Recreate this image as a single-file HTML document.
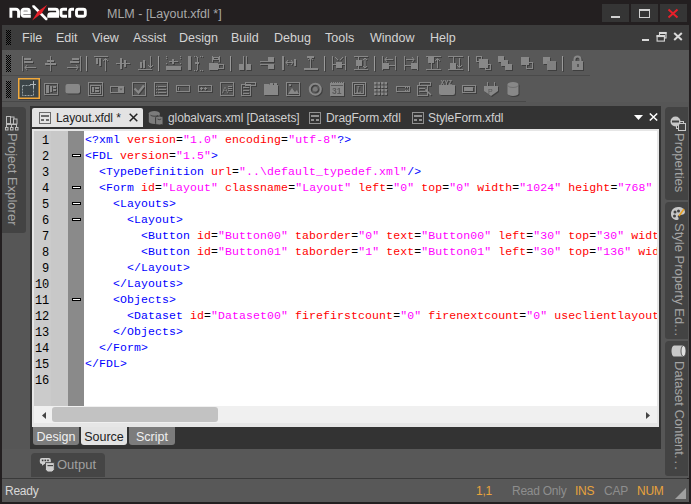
<!DOCTYPE html><html><head><meta charset="utf-8"><style>
*{margin:0;padding:0;box-sizing:border-box}
html,body{width:691px;height:504px;overflow:hidden;background:#231f20;font-family:"Liberation Sans",sans-serif;font-size:12px;position:relative}
.a{position:absolute}
.wb{top:4px;width:27px;height:18px;background:#353535}
.grip{width:6px;background-image:linear-gradient(45deg,#1a1a1a 25%,transparent 25%,transparent 75%,#1a1a1a 75%),linear-gradient(45deg,#1a1a1a 25%,transparent 25%,transparent 75%,#1a1a1a 75%);background-size:2px 2px;background-position:0 0,1px 1px}
.mi{top:31px;color:#d4d4d4;font-size:12.5px;line-height:15px;white-space:nowrap}
.ic{top:55px;width:16px;height:16px;filter:drop-shadow(1px 1px 0 #404040)}
.ic2{top:80px}
.sep{width:1px;height:15px;background:#8a8a8a;box-shadow:1px 0 0 #444}
.tab{top:109px;height:19px;color:#d0d0d0;font-size:12px;letter-spacing:-0.1px;line-height:19px;white-space:nowrap}
.code{left:85px;font-family:"Liberation Mono",monospace;font-size:11.5px;letter-spacing:0.1px;line-height:16px;white-space:pre;color:#000}
.ln{font-family:"Liberation Mono",monospace;font-size:12px;letter-spacing:-0.2px;line-height:16px;white-space:pre;color:#000;text-align:right;width:20px;left:29px}
.t{color:#0000ff}.n{color:#ff0000}.v{color:#ff00ff}
.fold{left:72px;width:9px;height:3px;border:1px solid #000;background:#fff}
.vt{writing-mode:vertical-rl;color:#a4a4a4;font-size:13px;white-space:nowrap;line-height:14px}
.btab{top:427px;height:18px;width:46px;font-size:12.5px;line-height:21px;text-align:center;border-radius:0 0 3px 3px}
.st{top:484px;font-size:12px;letter-spacing:-0.25px;line-height:15px;white-space:nowrap}
</style></head><body><svg class="a" style="left:0;top:0" width="100" height="25" viewBox="0 0 100 25"><g fill="none" stroke="#fff" stroke-width="2.9" stroke-linecap="butt"><path d="M10.9 17.8V9.3H16A2.6 2.6 0 0 1 18.6 11.9V17.8"/><path d="M30.8 16.3H24A2 2 0 0 1 21.9 14.3V11.3A2 2 0 0 1 24 9.3H27.3A2 2 0 0 1 29.3 11.3V12.8H21.9"/><path d="M48 9.3H55.6A2 2 0 0 1 57.6 11.3V17.8M57.6 13.8H50.7A2 2 0 0 0 48.7 15.8V16.3H57.6"/><path d="M67 9.3H63A2 2 0 0 0 61 11.3V14.3A2 2 0 0 0 63 16.3H67"/><path d="M69.7 17.8V11.3A2 2 0 0 1 71.7 9.3H74"/><path d="M78.5 9.3H83.3A2 2 0 0 1 85.3 11.3V14.3A2 2 0 0 1 83.3 16.3H78.5A2 2 0 0 1 76.5 14.3V11.3A2 2 0 0 1 78.5 9.3Z"/></g><path d="M32.3 5.2L34.4 5.2L47.6 18.6L47.2 20.2L45.6 20.2L32.3 7Z" fill="#fff"/><path d="M47.2 4.8L41.5 13.6L32.2 20.4L37.8 11.6Z" fill="#e8202a"/></svg><div class="a" style="left:107px;top:6px;color:#a9a9a9;font-size:12.5px;line-height:16px;white-space:nowrap">MLM - [Layout.xfdl *]</div><div class="a wb" style="left:602px"></div><div class="a wb" style="left:631px"></div><div class="a wb" style="left:660px"></div><div class="a" style="left:611px;top:16px;width:9px;height:2px;background:#d0d0d0"></div><div class="a" style="left:639px;top:9px;width:11px;height:9px;border:1.5px solid #d0d0d0;border-top-width:2.5px"></div><svg class="a" style="left:667px;top:8px" width="12" height="11"><path d="M1.5 1.5L10.5 9.5M10.5 1.5L1.5 9.5" stroke="#e8202a" stroke-width="2"/></svg><div class="a" style="left:2px;top:25px;width:687px;height:25px;background:#3c3c3c"></div><svg class="a" style="left:6px;top:30px" width="5" height="15" fill="#000" shape-rendering="crispEdges"><rect x="0" y="0" width="1" height="1"/><rect x="2" y="0" width="1" height="1"/><rect x="4" y="0" width="1" height="1"/><rect x="1" y="1" width="1" height="1"/><rect x="3" y="1" width="1" height="1"/><rect x="0" y="2" width="1" height="1"/><rect x="2" y="2" width="1" height="1"/><rect x="4" y="2" width="1" height="1"/><rect x="1" y="3" width="1" height="1"/><rect x="3" y="3" width="1" height="1"/><rect x="0" y="4" width="1" height="1"/><rect x="2" y="4" width="1" height="1"/><rect x="4" y="4" width="1" height="1"/><rect x="1" y="5" width="1" height="1"/><rect x="3" y="5" width="1" height="1"/><rect x="0" y="6" width="1" height="1"/><rect x="2" y="6" width="1" height="1"/><rect x="4" y="6" width="1" height="1"/><rect x="1" y="7" width="1" height="1"/><rect x="3" y="7" width="1" height="1"/><rect x="0" y="8" width="1" height="1"/><rect x="2" y="8" width="1" height="1"/><rect x="4" y="8" width="1" height="1"/><rect x="1" y="9" width="1" height="1"/><rect x="3" y="9" width="1" height="1"/><rect x="0" y="10" width="1" height="1"/><rect x="2" y="10" width="1" height="1"/><rect x="4" y="10" width="1" height="1"/><rect x="1" y="11" width="1" height="1"/><rect x="3" y="11" width="1" height="1"/><rect x="0" y="12" width="1" height="1"/><rect x="2" y="12" width="1" height="1"/><rect x="4" y="12" width="1" height="1"/><rect x="1" y="13" width="1" height="1"/><rect x="3" y="13" width="1" height="1"/><rect x="0" y="14" width="1" height="1"/><rect x="2" y="14" width="1" height="1"/><rect x="4" y="14" width="1" height="1"/></svg><div class="a mi" style="left:22px">File</div><div class="a mi" style="left:56px">Edit</div><div class="a mi" style="left:92px">View</div><div class="a mi" style="left:133px">Assist</div><div class="a mi" style="left:179px">Design</div><div class="a mi" style="left:231px">Build</div><div class="a mi" style="left:274px">Debug</div><div class="a mi" style="left:325px">Tools</div><div class="a mi" style="left:370px">Window</div><div class="a mi" style="left:430px">Help</div><div class="a" style="left:642px;top:39px;width:7px;height:2px;background:#d8d8d8"></div><svg class="a" style="left:656px;top:31px" width="12" height="11"><rect x="3.5" y="1.5" width="6.5" height="5.5" fill="none" stroke="#d8d8d8" stroke-width="1.1"/><rect x="3" y="1" width="7.5" height="2" fill="#d8d8d8"/><rect x="1.1" y="4.6" width="7.3" height="5.5" fill="#3c3c3c" stroke="#d8d8d8" stroke-width="1.1"/><rect x="0.6" y="4.1" width="8.3" height="2" fill="#d8d8d8"/></svg><svg class="a" style="left:673px;top:32px" width="10" height="9"><path d="M1.2 1L8.8 8M8.8 1L1.2 8" stroke="#d8d8d8" stroke-width="2"/></svg><div class="a" style="left:2px;top:50px;width:687px;height:52px;background:#585858"></div><div class="a" style="left:2px;top:75px;width:588px;height:1px;background:#4a4a4a"></div><div class="a" style="left:2px;top:101px;width:524px;height:1px;background:#484848"></div><svg class="a" style="left:6px;top:55px" width="5" height="17" fill="#000" shape-rendering="crispEdges"><rect x="0" y="0" width="1" height="1"/><rect x="2" y="0" width="1" height="1"/><rect x="4" y="0" width="1" height="1"/><rect x="1" y="1" width="1" height="1"/><rect x="3" y="1" width="1" height="1"/><rect x="0" y="2" width="1" height="1"/><rect x="2" y="2" width="1" height="1"/><rect x="4" y="2" width="1" height="1"/><rect x="1" y="3" width="1" height="1"/><rect x="3" y="3" width="1" height="1"/><rect x="0" y="4" width="1" height="1"/><rect x="2" y="4" width="1" height="1"/><rect x="4" y="4" width="1" height="1"/><rect x="1" y="5" width="1" height="1"/><rect x="3" y="5" width="1" height="1"/><rect x="0" y="6" width="1" height="1"/><rect x="2" y="6" width="1" height="1"/><rect x="4" y="6" width="1" height="1"/><rect x="1" y="7" width="1" height="1"/><rect x="3" y="7" width="1" height="1"/><rect x="0" y="8" width="1" height="1"/><rect x="2" y="8" width="1" height="1"/><rect x="4" y="8" width="1" height="1"/><rect x="1" y="9" width="1" height="1"/><rect x="3" y="9" width="1" height="1"/><rect x="0" y="10" width="1" height="1"/><rect x="2" y="10" width="1" height="1"/><rect x="4" y="10" width="1" height="1"/><rect x="1" y="11" width="1" height="1"/><rect x="3" y="11" width="1" height="1"/><rect x="0" y="12" width="1" height="1"/><rect x="2" y="12" width="1" height="1"/><rect x="4" y="12" width="1" height="1"/><rect x="1" y="13" width="1" height="1"/><rect x="3" y="13" width="1" height="1"/><rect x="0" y="14" width="1" height="1"/><rect x="2" y="14" width="1" height="1"/><rect x="4" y="14" width="1" height="1"/><rect x="1" y="15" width="1" height="1"/><rect x="3" y="15" width="1" height="1"/><rect x="0" y="16" width="1" height="1"/><rect x="2" y="16" width="1" height="1"/><rect x="4" y="16" width="1" height="1"/></svg><svg class="a" style="left:6px;top:81px" width="5" height="17" fill="#000" shape-rendering="crispEdges"><rect x="0" y="0" width="1" height="1"/><rect x="2" y="0" width="1" height="1"/><rect x="4" y="0" width="1" height="1"/><rect x="1" y="1" width="1" height="1"/><rect x="3" y="1" width="1" height="1"/><rect x="0" y="2" width="1" height="1"/><rect x="2" y="2" width="1" height="1"/><rect x="4" y="2" width="1" height="1"/><rect x="1" y="3" width="1" height="1"/><rect x="3" y="3" width="1" height="1"/><rect x="0" y="4" width="1" height="1"/><rect x="2" y="4" width="1" height="1"/><rect x="4" y="4" width="1" height="1"/><rect x="1" y="5" width="1" height="1"/><rect x="3" y="5" width="1" height="1"/><rect x="0" y="6" width="1" height="1"/><rect x="2" y="6" width="1" height="1"/><rect x="4" y="6" width="1" height="1"/><rect x="1" y="7" width="1" height="1"/><rect x="3" y="7" width="1" height="1"/><rect x="0" y="8" width="1" height="1"/><rect x="2" y="8" width="1" height="1"/><rect x="4" y="8" width="1" height="1"/><rect x="1" y="9" width="1" height="1"/><rect x="3" y="9" width="1" height="1"/><rect x="0" y="10" width="1" height="1"/><rect x="2" y="10" width="1" height="1"/><rect x="4" y="10" width="1" height="1"/><rect x="1" y="11" width="1" height="1"/><rect x="3" y="11" width="1" height="1"/><rect x="0" y="12" width="1" height="1"/><rect x="2" y="12" width="1" height="1"/><rect x="4" y="12" width="1" height="1"/><rect x="1" y="13" width="1" height="1"/><rect x="3" y="13" width="1" height="1"/><rect x="0" y="14" width="1" height="1"/><rect x="2" y="14" width="1" height="1"/><rect x="4" y="14" width="1" height="1"/><rect x="1" y="15" width="1" height="1"/><rect x="3" y="15" width="1" height="1"/><rect x="0" y="16" width="1" height="1"/><rect x="2" y="16" width="1" height="1"/><rect x="4" y="16" width="1" height="1"/></svg><svg class="a" style="left:0;top:0;filter:drop-shadow(1px 1px 0 #3e3e3e)" width="691" height="101" viewBox="0 0 691 101"><rect x="86" y="56" width="1" height="15" fill="#9a9a9a"/><rect x="158" y="56" width="1" height="15" fill="#9a9a9a"/><rect x="230" y="56" width="1" height="15" fill="#9a9a9a"/><rect x="324" y="56" width="1" height="15" fill="#9a9a9a"/><rect x="374" y="56" width="1" height="15" fill="#9a9a9a"/><rect x="468" y="56" width="1" height="15" fill="#9a9a9a"/><rect x="562" y="56" width="1" height="15" fill="#9a9a9a"/><rect x="22" y="56" width="1" height="15" fill="#888888"/><rect x="24" y="58" width="7" height="2" fill="#888888"/><rect x="24" y="61" width="9" height="2" fill="#888888"/><rect x="25" y="67" width="11" height="1" fill="#888888"/><path d="M27 65L25 67.5L27 70" fill="none" stroke="#888888" stroke-width="1"/><rect x="50" y="56" width="1" height="15" fill="#888888"/><rect x="47" y="60" width="7" height="2" fill="#888888"/><rect x="45" y="63" width="11" height="2" fill="#888888"/><rect x="80" y="56" width="1" height="15" fill="#888888"/><rect x="72" y="58" width="7" height="2" fill="#888888"/><rect x="70" y="61" width="9" height="2" fill="#888888"/><rect x="67" y="67" width="11" height="1" fill="#888888"/><path d="M76 65L78 67.5L76 70" fill="none" stroke="#888888" stroke-width="1"/><rect x="94" y="56" width="14" height="1" fill="#888888"/><rect x="96" y="58" width="2" height="6" fill="#888888"/><rect x="99" y="58" width="2" height="8" fill="#888888"/><rect x="105" y="59" width="1" height="12" fill="#888888"/><path d="M103 61L105.5 58.5L108 61" fill="none" stroke="#888888" stroke-width="1"/><rect x="116" y="63" width="14" height="1" fill="#888888"/><rect x="120" y="58" width="2" height="11" fill="#888888"/><rect x="124" y="60" width="2" height="7" fill="#888888"/><rect x="138" y="69" width="14" height="1" fill="#888888"/><rect x="140" y="62" width="2" height="6" fill="#888888"/><rect x="143" y="60" width="2" height="8" fill="#888888"/><rect x="150" y="56" width="1" height="12" fill="#888888"/><path d="M148 65L150.5 67.5L153 65" fill="none" stroke="#888888" stroke-width="1"/><rect x="166" y="56" width="1" height="1" fill="#888888"/><rect x="166" y="58" width="1" height="1" fill="#888888"/><rect x="180" y="56" width="1" height="1" fill="#888888"/><rect x="180" y="58" width="1" height="1" fill="#888888"/><rect x="166" y="63" width="1" height="1" fill="#888888"/><rect x="180" y="63" width="1" height="1" fill="#888888"/><rect x="166" y="66" width="15" height="4" fill="#888888"/><rect x="169" y="61" width="9" height="1" fill="#888888"/><rect x="172" y="59" width="2" height="5" fill="#888888"/><rect x="188" y="56" width="3" height="14" fill="#888888"/><rect x="194" y="56" width="1" height="1" fill="#888888"/><rect x="196" y="56" width="1" height="1" fill="#888888"/><rect x="200" y="56" width="1" height="1" fill="#888888"/><rect x="202" y="56" width="1" height="1" fill="#888888"/><rect x="194" y="70" width="1" height="1" fill="#888888"/><rect x="196" y="70" width="1" height="1" fill="#888888"/><rect x="200" y="70" width="1" height="1" fill="#888888"/><rect x="202" y="70" width="1" height="1" fill="#888888"/><rect x="197" y="57" width="1" height="13" fill="#888888"/><rect x="195" y="62" width="4" height="2" fill="#888888"/><rect x="212" y="56" width="1" height="6" fill="#888888"/><rect x="219" y="56" width="1" height="6" fill="#888888"/><rect x="213.5" y="57.5" width="5" height="2" fill="none" stroke="#888888" stroke-width="1"/><rect x="209" y="63" width="9" height="7" fill="#888888"/><rect x="218.5" y="64.5" width="5" height="4" fill="none" stroke="#888888" stroke-width="1"/><rect x="243" y="56" width="1" height="8" fill="#888888"/><rect x="246" y="56" width="1" height="8" fill="#888888"/><rect x="239" y="64" width="5" height="6" fill="#888888"/><rect x="246" y="64" width="5" height="6" fill="#888888"/><rect x="260" y="61" width="8" height="1" fill="#888888"/><rect x="260" y="64" width="8" height="1" fill="#888888"/><rect x="268" y="57" width="6" height="5" fill="#888888"/><rect x="268" y="64" width="6" height="5" fill="#888888"/><rect x="282" y="56" width="2" height="14" fill="#888888"/><rect x="294" y="59" width="2" height="7" fill="#888888"/><rect x="286" y="62" width="7" height="1" fill="#888888"/><path d="M288 60L286 62.5L288 65M291 60L293 62.5L291 65" fill="none" stroke="#888888" stroke-width="1"/><rect x="307" y="56" width="7" height="2" fill="#888888"/><rect x="304" y="68" width="14" height="2" fill="#888888"/><rect x="310" y="58" width="1" height="10" fill="#888888"/><path d="M308 60L310.5 58L313 60" fill="none" stroke="#888888" stroke-width="1"/><rect x="332" y="56" width="1" height="14" fill="#888888"/><rect x="345" y="56" width="1" height="14" fill="#888888"/><rect x="333" y="64" width="12" height="1" fill="#888888"/><rect x="336" y="62" width="6" height="6" fill="#888888"/><path d="M335 57L338 60M343 57L340 60" fill="none" stroke="#888888" stroke-width="1"/><rect x="354" y="56" width="14" height="1" fill="#888888"/><rect x="354" y="69" width="14" height="1" fill="#888888"/><rect x="358" y="57" width="1" height="12" fill="#888888"/><rect x="356" y="60" width="6" height="6" fill="#888888"/><path d="M365 58L365 68M363 60L365 58L367 60M363 66L365 68L367 66" fill="none" stroke="#888888" stroke-width="1"/><rect x="382" y="56" width="1" height="14" fill="#888888"/><rect x="395" y="56" width="1" height="14" fill="#888888"/><rect x="383" y="65" width="12" height="1" fill="#888888"/><rect x="383" y="63" width="6" height="6" fill="#888888"/><rect x="385" y="59" width="8" height="1" fill="#888888"/><path d="M387 57L385 59.5L387 62" fill="none" stroke="#888888" stroke-width="1"/><rect x="404" y="56" width="1" height="14" fill="#888888"/><rect x="417" y="56" width="1" height="14" fill="#888888"/><rect x="405" y="65" width="12" height="1" fill="#888888"/><rect x="411" y="63" width="6" height="6" fill="#888888"/><rect x="406" y="59" width="8" height="1" fill="#888888"/><path d="M412 57L414 59.5L412 62" fill="none" stroke="#888888" stroke-width="1"/><rect x="426" y="56" width="15" height="1" fill="#888888"/><rect x="426" y="69" width="15" height="1" fill="#888888"/><rect x="428" y="57" width="6" height="6" fill="#888888"/><rect x="431" y="63" width="1" height="6" fill="#888888"/><rect x="437" y="59" width="1" height="9" fill="#888888"/><path d="M435 61L437.5 58.5L440 61" fill="none" stroke="#888888" stroke-width="1"/><rect x="448" y="56" width="15" height="1" fill="#888888"/><rect x="448" y="69" width="15" height="1" fill="#888888"/><rect x="450" y="63" width="6" height="6" fill="#888888"/><rect x="453" y="57" width="1" height="6" fill="#888888"/><rect x="459" y="58" width="1" height="9" fill="#888888"/><path d="M457 65L459.5 67.5L462 65" fill="none" stroke="#888888" stroke-width="1"/><rect x="476.5" y="56.5" width="5" height="5" fill="none" stroke="#888888" stroke-width="1"/><rect x="479" y="59" width="9" height="9" fill="#888888"/><rect x="485.5" y="64.5" width="5" height="5" fill="none" stroke="#888888" stroke-width="1"/><rect x="498" y="56" width="6" height="6" fill="#888888"/><rect x="501" y="60" width="7" height="6" fill="#868686"/><rect x="505" y="64" width="7" height="6" fill="#888888"/><rect x="521" y="57" width="8" height="8" fill="#888888"/><rect x="526.5" y="62.5" width="6" height="6" fill="none" stroke="#888888" stroke-width="1"/><rect x="543" y="57" width="7" height="7" fill="#888888"/><rect x="547" y="61" width="9" height="9" fill="#808080"/><path d="M574.5 62V59.5A3 3 0 0 1 580.5 59.5V62" fill="none" stroke="#888888" stroke-width="2"/><rect x="572" y="61" width="11" height="9" fill="#888888"/><rect x="577" y="64" width="2" height="3" fill="#585858"/><rect x="18.75" y="78.75" width="20.5" height="19.5" fill="#3b4548" stroke="#f2a93b" stroke-width="1.5"/><path d="M22.5 85.5H31M22.5 85.5V95.5H33.5V88" fill="none" stroke="#9aa4a6" stroke-width="1" stroke-dasharray="2 1"/><rect x="30" y="84" width="6" height="1" fill="#b0b8ba"/><rect x="33" y="81" width="1" height="7" fill="#b0b8ba"/><rect x="44.5" y="83.5" width="13" height="11" fill="none" stroke="#888888" stroke-width="1"/><rect x="46" y="85" width="3" height="8" fill="#888888"/><rect x="50" y="86" width="2" height="6" fill="#888888"/><rect x="53" y="86" width="3" height="2" fill="#888888"/><rect x="53" y="89" width="3" height="2" fill="#888888"/><rect x="65.5" y="84" width="14.5" height="9.5" rx="2" fill="#888888"/><rect x="88.5" y="82.5" width="14" height="13" fill="none" stroke="#888888" stroke-width="1"/><rect x="90.5" y="85.5" width="10" height="8" fill="none" stroke="#888888" stroke-width="1"/><rect x="92" y="87" width="2" height="5" fill="#888888"/><rect x="95" y="87" width="4" height="2" fill="#888888"/><rect x="95" y="90" width="4" height="2" fill="#888888"/><rect x="110.5" y="86.5" width="13" height="6" fill="none" stroke="#888888" stroke-width="1"/><rect x="118" y="86" width="6" height="7" fill="#888888"/><path d="M119.5 88.5H122.5L121 90.5Z" fill="#585858"/><rect x="132.5" y="82.5" width="13" height="13" fill="none" stroke="#888888" stroke-width="1"/><path d="M134.5 88.5L138.5 92.5L144 85.5" fill="none" stroke="#888888" stroke-width="2.3"/><rect x="154.5" y="82.5" width="13" height="13" fill="none" stroke="#888888" stroke-width="1"/><rect x="156" y="86" width="1" height="1" fill="#888888"/><rect x="158" y="86" width="8" height="1" fill="#888888"/><rect x="156" y="89" width="1" height="1" fill="#888888"/><rect x="158" y="89" width="8" height="1" fill="#888888"/><rect x="156" y="92" width="1" height="1" fill="#888888"/><rect x="158" y="92" width="8" height="1" fill="#888888"/><rect x="176.5" y="85.5" width="13" height="6" fill="none" stroke="#888888" stroke-width="1"/><rect x="178" y="87" width="1" height="3" fill="#888888"/><rect x="198.5" y="85.5" width="13" height="6" fill="none" stroke="#888888" stroke-width="1"/><path d="M200 88.5H203M201.5 87V90M204 88.5H207M205.5 87V90" fill="none" stroke="#888888" stroke-width="1"/><rect x="220.5" y="82.5" width="13" height="13" fill="none" stroke="#888888" stroke-width="1"/><text x="222" y="93" font-family="Liberation Sans" font-size="9" fill="#888888">A</text><rect x="228" y="86" width="4" height="1" fill="#888888"/><rect x="228" y="88" width="4" height="1" fill="#888888"/><rect x="228" y="90" width="4" height="1" fill="#888888"/><rect x="241.5" y="84.5" width="9" height="11" fill="none" stroke="#888888" stroke-width="1"/><rect x="245.5" y="82.5" width="10" height="3" fill="none" stroke="#888888" stroke-width="1"/><rect x="243" y="87" width="6" height="1" fill="#888888"/><rect x="243" y="90" width="6" height="1" fill="#888888"/><rect x="243" y="93" width="6" height="1" fill="#888888"/><path d="M264 84H269L270 85H278V95H264Z" fill="#888888"/><rect x="270" y="83" width="3" height="2" fill="#888888"/><rect x="274" y="83" width="3" height="2" fill="#888888"/><rect x="286.5" y="82.5" width="13" height="13" fill="none" stroke="#888888" stroke-width="1"/><path d="M288 94L292 88L295 92L297 90L299 94Z" fill="#888888"/><rect x="289" y="84" width="2" height="2" fill="#888888"/><circle cx="315.3" cy="89.2" r="5.5" fill="none" stroke="#888888" stroke-width="2"/><circle cx="315.3" cy="89.2" r="2.5" fill="#7a7a7a"/><rect x="330" y="83" width="14" height="13" fill="#888888"/><rect x="331" y="82" width="1" height="1" fill="#888888"/><rect x="333" y="82" width="1" height="1" fill="#888888"/><rect x="335" y="82" width="1" height="1" fill="#888888"/><rect x="337" y="82" width="1" height="1" fill="#888888"/><rect x="339" y="82" width="1" height="1" fill="#888888"/><rect x="341" y="82" width="1" height="1" fill="#888888"/><rect x="343" y="82" width="1" height="1" fill="#888888"/><text x="332" y="94" font-family="Liberation Sans" font-weight="bold" font-size="8.5" fill="#5a5a5a">31</text><rect x="331" y="85" width="12" height="1" fill="#5a5a5a"/><rect x="352.5" y="82.5" width="13" height="13" fill="none" stroke="#888888" stroke-width="1"/><rect x="354.5" y="84.5" width="9" height="9" fill="none" stroke="#888888" stroke-width="1"/><text x="356" y="93" font-family="Liberation Serif" font-style="italic" font-size="10" fill="#888888">L</text><rect x="374.0" y="82.0" width="2.5" height="2.5" fill="#888888"/><rect x="374.0" y="85.5" width="2.5" height="2.5" fill="#888888"/><rect x="374.0" y="89.0" width="2.5" height="2.5" fill="#888888"/><rect x="374.0" y="92.5" width="2.5" height="2.5" fill="#888888"/><rect x="377.5" y="82.0" width="2.5" height="2.5" fill="#888888"/><rect x="377.5" y="85.5" width="2.5" height="2.5" fill="#888888"/><rect x="377.5" y="89.0" width="2.5" height="2.5" fill="#888888"/><rect x="377.5" y="92.5" width="2.5" height="2.5" fill="#888888"/><rect x="381.0" y="82.0" width="2.5" height="2.5" fill="#888888"/><rect x="381.0" y="85.5" width="2.5" height="2.5" fill="#888888"/><rect x="381.0" y="89.0" width="2.5" height="2.5" fill="#888888"/><rect x="381.0" y="92.5" width="2.5" height="2.5" fill="#888888"/><rect x="384.5" y="82.0" width="2.5" height="2.5" fill="#888888"/><rect x="384.5" y="85.5" width="2.5" height="2.5" fill="#888888"/><rect x="384.5" y="89.0" width="2.5" height="2.5" fill="#888888"/><rect x="384.5" y="92.5" width="2.5" height="2.5" fill="#888888"/><rect x="396.5" y="86.5" width="13" height="5" fill="none" stroke="#888888" stroke-width="1"/><path d="M405 88L406.5 86.5L408 88M405 90L406.5 91.5L408 90" fill="none" stroke="#888888" stroke-width="1"/><rect x="419.5" y="82.5" width="11" height="3" fill="none" stroke="#888888" stroke-width="1"/><rect x="417.5" y="85.5" width="10" height="10" fill="none" stroke="#888888" stroke-width="1"/><rect x="419" y="88" width="6" height="1" fill="#888888"/><rect x="419" y="91" width="6" height="1" fill="#888888"/><path d="M426 90L431 95M428 90H426V92" fill="none" stroke="#888888" stroke-width="1.5"/><path d="M439 85H455V93A2 2 0 0 1 453 95H441A2 2 0 0 1 439 93Z" fill="#888888"/><text x="440.5" y="85" font-family="Liberation Mono" font-weight="bold" font-size="6.5" fill="#888888">XYZ</text><rect x="462.5" y="85.5" width="13" height="7" fill="none" stroke="#888888" stroke-width="1"/><rect x="464" y="87" width="9" height="4" fill="#888888"/><rect x="487" y="82" width="1" height="4" fill="#888888"/><rect x="494" y="82" width="1" height="4" fill="#888888"/><path d="M484 86H498V91L491 96L484 91Z" fill="#888888"/><text x="488" y="94" font-family="Liberation Sans" font-size="7" fill="#585858">P</text><path d="M507.5 84.5A5.5 2.5 0 0 1 518.5 84.5V93.5A5.5 2.5 0 0 1 507.5 93.5Z" fill="#888888"/><path d="M508 85.5A5 2 0 0 0 518 85.5" fill="none" stroke="#6a6a6a" stroke-width="0.8"/></svg><div class="a" style="left:2px;top:102px;width:687px;height:376px;background:#565656"></div><div class="a" style="left:2px;top:478px;width:685px;height:1px;background:#3a3a3a"></div><div class="a" style="left:2px;top:479px;width:687px;height:23px;background:#585858"></div><div class="a" style="left:2px;top:449px;width:687px;height:29px;background:#585858"></div><div class="a" style="left:2px;top:107px;width:24px;height:126px;background:#434343;border-radius:0 4px 3px 0"></div><svg class="a" style="left:4px;top:115px" width="16" height="16" viewBox="0 0 16 16"><rect x="2.5" y="1.5" width="4" height="7" fill="#434343" stroke="#bdbdbd"/><rect x="6.5" y="2" width="3.5" height="7" fill="#434343" stroke="#bdbdbd"/><rect x="9.5" y="4" width="3.5" height="5" fill="#434343" stroke="#bdbdbd"/><path d="M2.5 9V12.5M7.5 9V12.5M12.5 9V12.5M2.5 9.5H12.5" stroke="#bdbdbd" fill="none"/><rect x="1.5" y="12.5" width="2.5" height="2.5" fill="none" stroke="#bdbdbd"/><rect x="6.5" y="12.5" width="2.5" height="2.5" fill="none" stroke="#bdbdbd"/><rect x="11.5" y="12.5" width="2.5" height="2.5" fill="none" stroke="#bdbdbd"/></svg><div class="a vt" style="left:5px;top:133px">Project Explorer</div><div class="a" style="left:665px;top:107px;width:23px;height:93px;background:#434343;border-radius:4px 0 0 3px"></div><div class="a" style="left:665px;top:202px;width:23px;height:137px;background:#434343;border-radius:4px 0 0 3px"></div><div class="a" style="left:665px;top:341px;width:23px;height:135px;background:#434343;border-radius:4px 0 0 3px"></div><svg class="a" style="left:670px;top:116px" width="16" height="15" viewBox="0 0 16 15"><rect x="6.5" y="5.5" width="7" height="7" fill="#434343" stroke="#c8c8c8"/><rect x="8.5" y="7.5" width="7" height="7" fill="#434343" stroke="#c8c8c8"/><circle cx="5.5" cy="5.5" r="5" fill="#c8c8c8"/><rect x="2" y="4.5" width="7" height="2" fill="#434343"/></svg><svg class="a" style="left:670px;top:205px" width="16" height="16" viewBox="0 0 16 16"><path d="M8 2C4 2 1 5 1 9C1 12.5 3.5 15 7 15C9 15 9 13 8 12C7 11 8 10 10 10C13 10 15 9 15 7C15 4 12 2 8 2Z" fill="#c8c8c8"/><circle cx="5" cy="7" r="1.5" fill="#434343"/><circle cx="4.5" cy="11" r="1.5" fill="#434343"/><circle cx="8.5" cy="6" r="1.5" fill="#434343"/><path d="M9 11L14 4" stroke="#e8a020" stroke-width="1.5"/></svg><svg class="a" style="left:671px;top:345px" width="16" height="12" viewBox="0 0 16 12"><path d="M3 0.5H12V11.5H3A2.5 5.5 0 0 1 3 0.5Z" fill="#c8c8c8"/><ellipse cx="12.5" cy="6" rx="2.5" ry="5.5" fill="#e0e0e0" stroke="#434343" stroke-width="0.8"/></svg><div class="a vt" style="left:672px;top:133px">Properties</div><div class="a vt" style="left:672px;top:223px">Style Property Ed<span style="letter-spacing:0.5px">...</span></div><div class="a vt" style="left:672px;top:361px">Dataset Content<span style="letter-spacing:2px">...</span></div><div class="a" style="left:30px;top:106px;width:631px;height:343px;background:#333"></div><div class="a" style="left:32px;top:108px;width:111px;height:19px;background:#e3e3e3;border-radius:2px 2px 0 0"></div><svg class="a" style="left:39px;top:112px" width="12" height="12" viewBox="0 0 12 12"><rect x="0.5" y="0.5" width="11" height="11" fill="none" stroke="#6c6c6c"/><rect x="2" y="3" width="8" height="2" fill="#6c6c6c"/><rect x="2" y="7" width="3" height="2" fill="#6c6c6c"/><rect x="7" y="7" width="3" height="2" fill="#6c6c6c"/></svg><svg class="a" style="left:309px;top:112px" width="12" height="12" viewBox="0 0 12 12"><rect x="0.5" y="0.5" width="11" height="11" fill="none" stroke="#909090"/><rect x="2" y="3" width="8" height="2" fill="#909090"/><rect x="2" y="7" width="3" height="2" fill="#909090"/><rect x="7" y="7" width="3" height="2" fill="#909090"/></svg><svg class="a" style="left:412px;top:112px" width="12" height="12" viewBox="0 0 12 12"><rect x="0.5" y="0.5" width="11" height="11" fill="none" stroke="#909090"/><rect x="2" y="3" width="8" height="2" fill="#909090"/><rect x="2" y="7" width="3" height="2" fill="#909090"/><rect x="7" y="7" width="3" height="2" fill="#909090"/></svg><svg class="a" style="left:148px;top:110px" width="16" height="16" viewBox="0 0 16 16"><path d="M0.8 3.2A5.5 2.2 0 0 1 11.8 3.2V11.8A5.5 2.2 0 0 1 0.8 11.8Z" fill="#7c7c7c"/><path d="M2.5 5.2A4.5 1.8 0 0 0 10 5.6" fill="none" stroke="#3a3a3a" stroke-width="0.9"/><path d="M7.6 7.6A3.7 1.6 0 0 1 15 7.6V13.4A3.7 1.6 0 0 1 7.6 13.4Z" fill="#7c7c7c" stroke="#333" stroke-width="0.9"/><path d="M9.5 9A2.2 1 0 0 0 13.2 9" fill="none" stroke="#3a3a3a" stroke-width="0.9"/></svg><div class="a tab" style="left:56px;color:#222">Layout.xfdl *</div><svg class="a" style="left:129px;top:113px" width="9" height="9"><path d="M0.7 0.7L8.3 8.3M8.3 0.7L0.7 8.3" stroke="#222" stroke-width="1.5"/></svg><div class="a tab" style="left:168px">globalvars.xml [Datasets]</div><div class="a tab" style="left:326px">DragForm.xfdl</div><div class="a tab" style="left:428px">StyleForm.xfdl</div><svg class="a" style="left:634px;top:115px" width="9" height="6"><path d="M0 0H9L4.5 5Z" fill="#fff"/></svg><svg class="a" style="left:649px;top:113px" width="9" height="8"><path d="M0.8 0.5L8.2 7.5M8.2 0.5L0.8 7.5" stroke="#fff" stroke-width="1.5"/></svg><div class="a" style="left:32px;top:129px;width:627px;height:298px;background:#fff;overflow:hidden"><div class="a" style="left:0;top:0;width:627px;height:2px;background:#e6e6e6"></div><div class="a" style="left:625px;top:0;width:2px;height:298px;background:#e6e6e6"></div><div class="a" style="left:0;top:0;width:2px;height:298px;background:#e6e6e6"></div><div class="a" style="left:2px;top:2px;width:17px;height:275px;background:#cbcbcb"></div><div class="a" style="left:19px;top:2px;width:17px;height:275px;background:#c8c8c8"></div><div class="a" style="left:36px;top:2px;width:16px;height:275px;background:#8a8a8a"></div><div class="a ln" style="left:-3px;top:4px;width:20px">1
2
3
4
5
6
7
8
9
10
11
12
13
14
15
16</div><div class="a fold" style="left:40px;top:25px"></div><div class="a fold" style="left:40px;top:57px"></div><div class="a fold" style="left:40px;top:73px"></div><div class="a fold" style="left:40px;top:89px"></div><div class="a fold" style="left:40px;top:169px"></div><div class="a" style="left:53px;top:2px;width:572px;height:275px;overflow:hidden"><div class="a code" style="left:0;top:1px"><span class="t">&lt;?xml</span> <span class="n">version</span>=<span class="v">"1.0"</span> <span class="n">encoding</span>=<span class="v">"utf-8"</span><span class="t">?&gt;</span>
<span class="t">&lt;FDL</span> <span class="n">version</span>=<span class="v">"1.5"</span><span class="t">&gt;</span>
  <span class="t">&lt;TypeDefinition</span> <span class="n">url</span>=<span class="v">"..\default_typedef.xml"</span><span class="t">/&gt;</span>
  <span class="t">&lt;Form</span> <span class="n">id</span>=<span class="v">"Layout"</span> <span class="n">classname</span>=<span class="v">"Layout"</span> <span class="n">left</span>=<span class="v">"0"</span> <span class="n">top</span>=<span class="v">"0"</span> <span class="n">width</span>=<span class="v">"1024"</span> <span class="n">height</span>=<span class="v">"768"</span> <span class="n">onload</span>=<span class="v">"Form_onload"</span><span class="t">&gt;</span>
    <span class="t">&lt;Layouts&gt;</span>
      <span class="t">&lt;Layout&gt;</span>
        <span class="t">&lt;Button</span> <span class="n">id</span>=<span class="v">"Button00"</span> <span class="n">taborder</span>=<span class="v">"0"</span> <span class="n">text</span>=<span class="v">"Button00"</span> <span class="n">left</span>=<span class="v">"30"</span> <span class="n">top</span>=<span class="v">"30"</span> <span class="n">width</span>=<span class="v">"120"</span> <span class="n">height</span>=<span class="v">"50"</span><span class="t">/&gt;</span>
        <span class="t">&lt;Button</span> <span class="n">id</span>=<span class="v">"Button01"</span> <span class="n">taborder</span>=<span class="v">"1"</span> <span class="n">text</span>=<span class="v">"Button01"</span> <span class="n">left</span>=<span class="v">"30"</span> <span class="n">top</span>=<span class="v">"136"</span> <span class="n">width</span>=<span class="v">"120"</span> <span class="n">height</span>=<span class="v">"50"</span><span class="t">/&gt;</span>
      <span class="t">&lt;/Layout&gt;</span>
    <span class="t">&lt;/Layouts&gt;</span>
    <span class="t">&lt;Objects&gt;</span>
      <span class="t">&lt;Dataset</span> <span class="n">id</span>=<span class="v">"Dataset00"</span> <span class="n">firefirstcount</span>=<span class="v">"0"</span> <span class="n">firenextcount</span>=<span class="v">"0"</span> <span class="n">useclientlayout</span>=<span class="v">"false"</span><span class="t">&gt;</span>
    <span class="t">&lt;/Objects&gt;</span>
  <span class="t">&lt;/Form&gt;</span>
<span class="t">&lt;/FDL&gt;</span>
</div></div><div class="a" style="left:2px;top:277px;width:623px;height:17px;background:#f0f0f0"></div><div class="a" style="left:0;top:294px;width:627px;height:4px;background:#e6e6e6"></div><div class="a" style="left:20px;top:278px;width:166px;height:15px;background:#c2c2c2;border-radius:3px"></div><svg class="a" style="left:10px;top:283px" width="4" height="7"><path d="M4 0V7L0 3.5Z" fill="#444"/></svg><svg class="a" style="left:614px;top:283px" width="4" height="7"><path d="M0 0V7L4 3.5Z" fill="#444"/></svg></div><div class="a btab" style="left:33px;background:#7c7c7c;color:#f0f0f0">Design</div><div class="a btab" style="left:81px;background:#e3e3e3;color:#222">Source</div><div class="a btab" style="left:129px;background:#7c7c7c;color:#f0f0f0">Script</div><div class="a" style="left:31px;top:453px;width:74px;height:24px;background:#454545;border-radius:4px 4px 0 0"></div><svg class="a" style="left:39px;top:457px" width="17" height="17" viewBox="0 0 17 17"><path d="M0.8 3A2 2 0 0 1 2.8 1H9.8A2 2 0 0 1 11.8 3V5A2 2 0 0 1 9.8 7H5.5L3 8.8V7H2.8A2 2 0 0 1 0.8 5Z" fill="#cfcfcf"/><rect x="2.8" y="2.6" width="1.6" height="1.6" fill="#3a3a3a"/><rect x="5.5" y="2.6" width="1.6" height="1.6" fill="#3a3a3a"/><rect x="8.2" y="2.6" width="1.6" height="1.6" fill="#3a3a3a"/><path d="M6.5 5.6H15.3V12.8L13 15H8.7L6.5 12.8Z" fill="#cfcfcf" stroke="#454545" stroke-width="0.9"/><rect x="8.5" y="8" width="5.5" height="1.2" fill="#454545"/></svg><div class="a" style="left:57px;top:457px;font-size:13px;line-height:16px;color:#a0a0a0">Output</div><div class="a st" style="left:5px;color:#d8d8d8">Ready</div><div class="a st" style="left:476px;color:#e8a33c">1,1</div><div class="a st" style="left:512px;color:#8e8e8e">Read Only</div><div class="a st" style="left:575px;color:#e8a33c">INS</div><div class="a st" style="left:604px;color:#8e8e8e">CAP</div><div class="a st" style="left:637px;color:#e8a33c">NUM</div><svg class="a" style="left:675px;top:488px" width="11" height="11"><path d="M11 0V11H0Z" fill="#a0a0a0"/></svg><div class="a" style="left:0;top:502px;width:691px;height:2px;background:#231f20"></div></body></html>
